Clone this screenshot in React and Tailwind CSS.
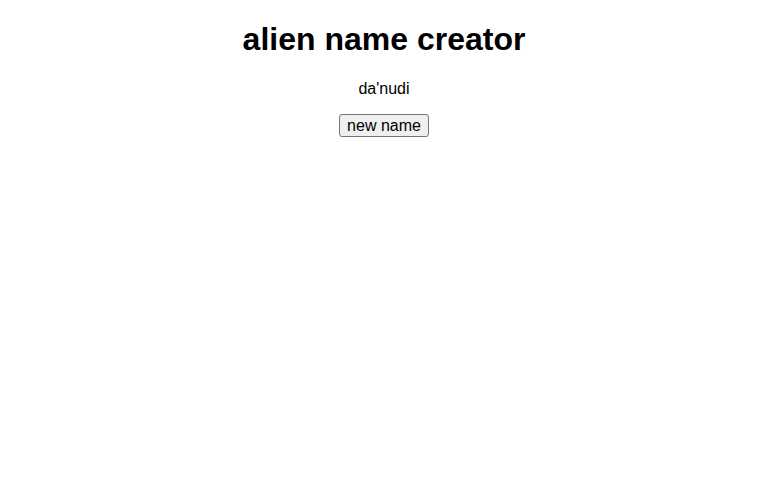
import React, { useState } from "react";

const syllables = ["da", "nu", "di", "zor", "ka", "qua", "xi", "bel", "tho", "ru"];

function makeName() {
  const pick = () => syllables[Math.floor(Math.random() * syllables.length)];
  return `${pick()}'${pick()}${pick()}`;
}

export default function App() {
  const [name, setName] = useState("da'nudi");
  return (
    <div className="text-center text-black bg-white min-h-[480px] font-['Liberation_Sans',Arial,sans-serif]">
      <h1 className="text-[32px] leading-[37px] font-bold pt-[21px] mb-[22px]">alien name creator</h1>
      <p className="text-[16px] leading-[18px] mb-4">{name}</p>
      <button
        onClick={() => setName(makeName())}
        className="text-[16px] leading-[19px] px-[7px] py-[1px] border border-[#767676] rounded-[3px] bg-[#efefef] text-black"
      >
        new name
      </button>
    </div>
  );
}
